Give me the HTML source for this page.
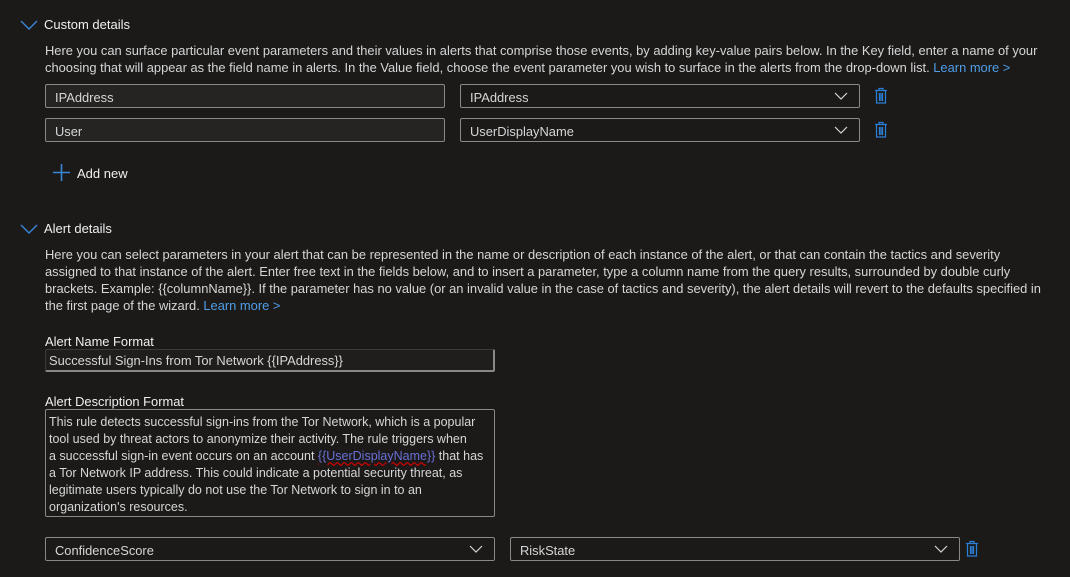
<!DOCTYPE html>
<html><head><meta charset="utf-8"><style>
html,body{margin:0;padding:0;background:#1b1a19;width:1070px;height:577px;overflow:hidden}
body{font-family:"Liberation Sans",sans-serif;font-size:12.9px;color:#d6d6d6;position:relative}
.a{position:absolute;white-space:nowrap}
.l{line-height:17px}
.box{position:absolute;border:1px solid #8a8886;box-sizing:border-box;border-radius:2px;background:#1f1e1d}
.box span{position:absolute;left:9px;top:5px}
.sel{background:#1b1a19}
.chev{position:absolute;right:10px;top:6px}
a{color:#4f9ee8;text-decoration:none}
</style></head><body>
<svg class="a" style="left:20px;top:19px" width="18" height="12"><path d="M1 2 L9 10 L17 2" stroke="#3a86d6" stroke-width="1.4" fill="none"/></svg>
<div class="a" style="left:44px;top:17px;font-size:13px;color:#f0f0f0">Custom details</div>
<div class="a l" style="left:45px;top:42px">Here you can surface particular event parameters and their values in alerts that comprise those events, by adding key-value pairs below. In the Key field, enter a name of your<br>choosing that will appear as the field name in alerts. In the Value field, choose the event parameter you wish to surface in the alerts from the drop-down list. <a>Learn more &gt;</a></div>

<div class="box" style="left:45px;top:84px;width:400px;height:24px;background:#252423"><span>IPAddress</span></div>
<div class="box sel" style="left:460px;top:84px;width:400px;height:24px"><span>IPAddress</span><svg class="chev" width="16" height="10"><path d="M2 2 L8 8 L14 2" stroke="#d6d6d6" stroke-width="1.2" fill="none"/></svg></div>
<div class="box" style="left:45px;top:118px;width:400px;height:24px;background:#252423"><span>User</span></div>
<div class="box sel" style="left:460px;top:118px;width:400px;height:24px"><span>UserDisplayName</span><svg class="chev" width="16" height="10"><path d="M2 2 L8 8 L14 2" stroke="#d6d6d6" stroke-width="1.2" fill="none"/></svg></div>

<svg class="a" style="left:874px;top:87px" width="14" height="17"><g stroke="#2b7fd6" stroke-width="1.2" fill="none"><path d="M1 3.5H13M5 3.5V1.5H9V3.5M2.5 3.5V16H11.5V3.5M5.5 6V14M7 6V14M8.5 6V14"/></g></svg>
<svg class="a" style="left:874px;top:121px" width="14" height="17"><g stroke="#2b7fd6" stroke-width="1.2" fill="none"><path d="M1 3.5H13M5 3.5V1.5H9V3.5M2.5 3.5V16H11.5V3.5M5.5 6V14M7 6V14M8.5 6V14"/></g></svg>

<svg class="a" style="left:53px;top:164px" width="17" height="17"><path d="M8.5 0V17M0 8.5H17" stroke="#3a86d6" stroke-width="1.6"/></svg>
<div class="a" style="left:77px;top:166px;font-size:13px;color:#f0f0f0">Add new</div>

<svg class="a" style="left:20px;top:223px" width="18" height="12"><path d="M1 2 L9 10 L17 2" stroke="#3a86d6" stroke-width="1.4" fill="none"/></svg>
<div class="a" style="left:44px;top:221px;font-size:13px;color:#f0f0f0">Alert details</div>
<div class="a l" style="left:45px;top:246px">Here you can select parameters in your alert that can be represented in the name or description of each instance of the alert, or that can contain the tactics and severity<br>assigned to that instance of the alert. Enter free text in the fields below, and to insert a parameter, type a column name from the query results, surrounded by double curly<br>brackets. Example: {{columnName}}. If the parameter has no value (or an invalid value in the case of tactics and severity), the alert details will revert to the defaults specified in<br>the first page of the wizard. <a>Learn more &gt;</a></div>

<div class="a" style="left:45px;top:334px;color:#f0f0f0">Alert Name Format</div>
<div class="box" style="left:45px;top:349px;width:450px;height:23px;border-color:#3b3a39;border-bottom:2px solid #8a8886;border-right:2px solid #8a8886;background:#1f1e1d"><span style="left:3px;top:3px">Successful Sign-Ins from Tor Network {{IPAddress}}</span></div>

<div class="a" style="left:45px;top:394px;color:#f0f0f0">Alert Description Format</div>
<div class="box" style="left:45px;top:409px;width:450px;height:108px;background:#1b1a19"><div class="a l" style="left:3px;top:4px;font-size:12.5px">This rule detects successful sign-ins from the Tor Network, which is a popular<br>tool used by threat actors to anonymize their activity. The rule triggers when<br>a successful sign-in event occurs on an account <span style="position:static;color:#6b6fd6;text-decoration:underline wavy #c00">{{UserDisplayName}}</span> that has<br>a Tor Network IP address. This could indicate a potential security threat, as<br>legitimate users typically do not use the Tor Network to sign in to an<br>organization's resources.</div></div>

<div class="box sel" style="left:45px;top:537px;width:450px;height:24px"><span>ConfidenceScore</span><svg class="chev" width="16" height="10"><path d="M2 2 L8 8 L14 2" stroke="#d6d6d6" stroke-width="1.2" fill="none"/></svg></div>
<div class="box sel" style="left:510px;top:537px;width:450px;height:24px"><span>RiskState</span><svg class="chev" width="16" height="10"><path d="M2 2 L8 8 L14 2" stroke="#d6d6d6" stroke-width="1.2" fill="none"/></svg></div>
<svg class="a" style="left:965px;top:540px" width="14" height="17"><g stroke="#2b7fd6" stroke-width="1.2" fill="none"><path d="M1 3.5H13M5 3.5V1.5H9V3.5M2.5 3.5V16H11.5V3.5M5.5 6V14M7 6V14M8.5 6V14"/></g></svg>
</body></html>
